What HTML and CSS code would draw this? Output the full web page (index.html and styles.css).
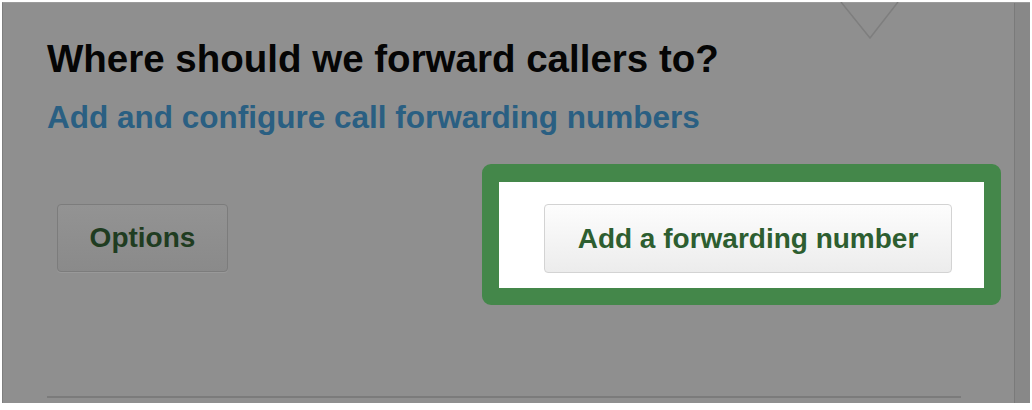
FILE: index.html
```html
<!DOCTYPE html>
<html>
<head>
<meta charset="utf-8">
<link rel="stylesheet" href="styles.css">
</head>
<body>
<div class="frame">
  <svg class="notch" width="64" height="40" viewBox="0 0 64 40">
    <polyline points="2,0 31,36 59,0" fill="none" stroke="#7e7e7e" stroke-width="1.5"/>
  </svg>
  <div class="main">
    <h1 class="title">Where should we forward callers to?</h1>
    <a class="link">Add and configure call forwarding numbers</a>
    <div class="actions">
      <button class="btn btn-options">Options</button>
      <div class="highlight">
        <button class="btn btn-add">Add a forwarding number</button>
      </div>
    </div>
    <div class="divider"></div>
  </div>
  <div class="strip"></div>
</div>
</body>
</html>
```
FILE: styles.css
```css
html, body {
  margin: 0;
  padding: 0;
  background: #ffffff;
}
body {
  padding: 2px 2px 0 2px;
  font-family: "Liberation Sans", Arial, sans-serif;
}
.frame {
  position: relative;
  height: 401px;
  box-sizing: border-box;
  display: flex;
  background: #8f8f8f;
  border-top: 1px solid #9c9c9c;
  border-left: 1px solid #7e7e7e;
}
.notch {
  position: absolute;
  left: 836px;
  top: -1px;
}
.main {
  flex: 1;
  display: flex;
  flex-direction: column;
  padding: 34px 53px 5px 44px;
}
.title {
  margin: 0;
  font-size: 38.5px;
  line-height: 44px;
  font-weight: bold;
  color: #050505;
}
.link {
  margin-top: 18px;
  font-size: 31.5px;
  line-height: 36px;
  font-weight: bold;
  color: #2a5f82;
}
.actions {
  margin-top: 29px;
  display: flex;
  align-items: flex-start;
}
.btn {
  font-family: "Liberation Sans", Arial, sans-serif;
  font-weight: bold;
  font-size: 28px;
  text-align: center;
  padding: 0;
  box-sizing: border-box;
  border-radius: 4px;
}
.btn-options {
  margin-top: 40px;
  margin-left: 10px;
  width: 171px;
  height: 68px;
  color: #1f3c21;
  border: 1px solid #7c7c7c;
  background: linear-gradient(#939393, #8a8a8a);
  box-shadow: 0 1px 0 #999999;
}
.highlight {
  margin-left: auto;
  margin-right: -40px;
  width: 519px;
  height: 141px;
  box-sizing: border-box;
  border-style: solid;
  border-color: #44874a;
  border-width: 18px 17px 17px 17px;
  border-radius: 9px;
  background: #ffffff;
  padding: 22px 32px 15px 45px;
}
.btn-add {
  width: 408px;
  height: 69px;
  color: #2d5e30;
  border: 1px solid #d3d3d3;
  background: linear-gradient(#fdfdfd, #ececec);
}
.divider {
  margin-top: auto;
  height: 2px;
  background: #7b7b7b;
}
.strip {
  width: 15px;
  background: #888888;
  border-left: 1px solid #7a7a7a;
}
```
